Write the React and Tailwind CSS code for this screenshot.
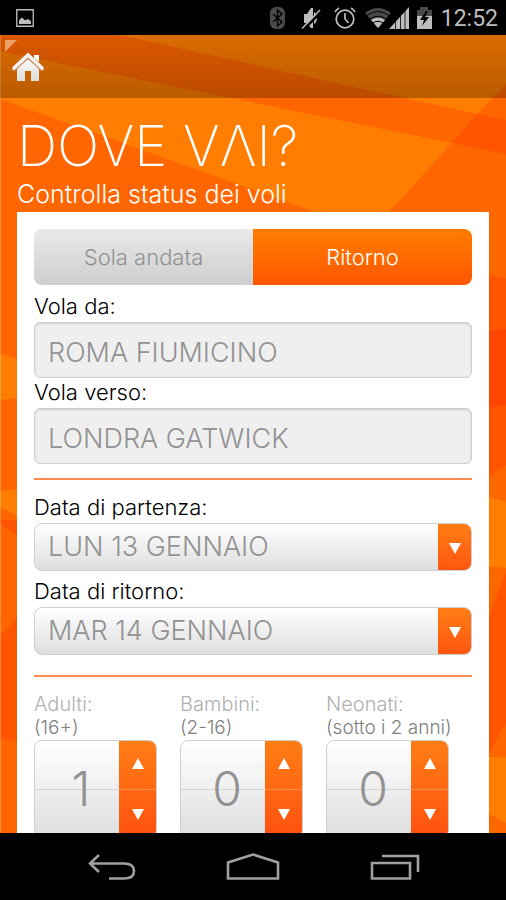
import { useState } from "react";

const light = "#ff7d00";
const dark = "#ff5500";

function Backdrop() {
  return (
    <svg className="absolute inset-0 h-full w-full" viewBox="0 35 506 798" preserveAspectRatio="none" aria-hidden="true">
      <rect x="0" y="35" width="506" height="798" fill="#ff6600" />
      <g fill={light}>
        <path d="M120 35H506V84L477 114Z" />
        <path d="M0 51L452 143L389 212H315L0 99Z" />
        <path d="M0 354L20 360V398L0 400Z" />
        <path d="M0 491L20 489V517L0 507Z" />
        <path d="M486 496L506 502V568L486 566Z" />
        <path d="M486 757H506V823L486 812Z" />
      </g>
      <g fill={dark}>
        <path d="M477 114L506 120V154L452 143Z" />
        <path d="M486 274L506 279V465L486 479Z" />
        <path d="M0 519L20 521V537L0 523Z" />
        <path d="M0 635L20 616V740L0 739Z" />
        <path d="M486 624L506 572V723L486 758Z" />
      </g>
      <path d="M486 331L506 329V405L486 408Z" fill="#ff4600" />
      <rect x="0" y="35" width="1" height="798" fill="#fff" opacity=".25" />
    </svg>
  );
}

function StatusBar() {
  return (
    <div className="flex h-[35px] shrink-0 items-center bg-black pl-4 pr-2 text-[#bdbdbd]">
      <svg width="18" height="18" viewBox="0 0 18 18" aria-hidden="true">
        <path d="M.75.75H17.25V17.25H.75Z" fill="none" stroke="currentColor" strokeWidth="1.3" />
        <path d="M3 15V12L4 10L6 8.500L8.500 11H10L12 10L14 11.500L15 12.500V15Z" fill="currentColor" />
      </svg>
      <svg className="ml-auto" width="164" height="26" viewBox="0 0 164 26" aria-hidden="true">
        <rect x="1" y="2" width="15" height="22" rx="6" fill="#4a4a4a" />
        <path d="M4 9L13 17L8.500 21V5L13 9L4 17" fill="none" stroke="#000" strokeWidth="1.4" />
        <path d="M35 9H38L42 3H44V23H42L38 18H35ZM45 7Q48 9 48 13Q48 17 45 19Z" fill="currentColor" />
        <path d="M34 25L53 6" stroke="#000" strokeWidth="2.500" />
        <path d="M33 23.500L51 5" stroke="currentColor" strokeWidth="1.500" />
        <g fill="none" stroke="currentColor" strokeWidth="1.700">
          <circle cx="76" cy="14" r="8.800" />
          <path d="M76 8V14L79.500 18M66 7Q67.500 4.500 70 3M82 3Q84.500 4.500 86 7" />
        </g>
        <path d="M96 8Q109 -2 122 8L109 23Z" fill="#4a4a4a" />
        <path d="M102 15Q109 10.500 116 15L109 23Z" fill="currentColor" />
        <path d="M98 10.500Q109 2.500 120 10.500M101 14Q109 8.500 117 14M104 18Q109 14.500 114 18" fill="none" stroke="#000" strokeWidth="1" />
        <path d="M120 24L140 2V24Z" fill="currentColor" />
        <path d="M126.500 15V24M131.500 10V24M136 5V24" stroke="#000" strokeWidth=".8" />
        <path d="M148 5H151V2H159V5H163V11H148Z" fill="#4a4a4a" />
        <path d="M148 11H163V24H148Z" fill="currentColor" />
        <path d="M157 6L151 15H155L153 21L160 12H156L159 6Z" fill="#000" />
      </svg>
      <time className="ml-2 pt-[2px] font-['Roboto',sans-serif] text-[23px] font-normal leading-[33px]">12:52</time>
    </div>
  );
}

function HomeIcon() {
  return (
    <svg width="34" height="30" viewBox="0 0 34 30" aria-hidden="true">
      <defs>
        <linearGradient id="home" x2="0" y2="1">
          <stop stopColor="#fff" />
          <stop offset="1" stopColor="#ddd" />
        </linearGradient>
      </defs>
      <path d="M23 3H28V10L23 6ZM6 16L17 6.500L28 16V29H20V19H14V29H6Z" fill="url(#home)" />
      <path d="M3 17L17 4.500L31 17" fill="none" stroke="#c98a5c" strokeWidth="4" strokeLinecap="round" />
      <path d="M3 16L17 3L31 16" fill="none" stroke="#f2f2f2" strokeWidth="3.600" strokeLinecap="round" />
    </svg>
  );
}

function Triangle({ up = false }) {
  return (
    <svg width="12" height="11" viewBox="0 0 12 11" className="shrink-0" aria-hidden="true">
      <path d={up ? "M6 0L12 11H0Z" : "M0 0H12L6 11Z"} fill="#fff" />
    </svg>
  );
}

function Airport({ id, label, value }) {
  return (
    <div>
      <label htmlFor={id} className="block h-[30px] pt-px text-[22px] leading-[26px] text-black">{label}</label>
      <input
        id={id}
        defaultValue={value}
        className="block h-14 w-full rounded-md border border-[#cfcfcf] bg-[#efefef] px-[13px] pt-1 text-[27px] font-light text-[#929292] shadow-[inset_0_1px_2px_#ccc] outline-none"
      />
    </div>
  );
}

function DateField({ id, label, value }) {
  return (
    <div>
      <label htmlFor={id} className="block h-[30px] text-[22px] leading-[28px] text-black">{label}</label>
      <div className="relative h-12 overflow-hidden rounded-lg border border-[#cfcfcf] bg-linear-to-b from-white to-[#dedede]">
        <select id={id} className="block h-full w-full appearance-none bg-transparent pl-[13px] pr-10 text-[27px] font-light text-[#929292] outline-none">
          <option>{value}</option>
        </select>
        <span className="pointer-events-none absolute inset-y-0 right-0 flex w-[33px] items-center justify-center bg-linear-to-b from-[#ff7d14] to-[#ff5510] pt-[2px]">
          <Triangle />
        </span>
      </div>
    </div>
  );
}

function Counter({ id, label, range, initial }) {
  const [count, setCount] = useState(initial);
  return (
    <div>
      <label htmlFor={id} className="block whitespace-nowrap font-light leading-6">
        <span className="block text-[20px] text-[#b0b0b0]">{label}</span>
        <span className="block text-[19px] text-[#808080]">{range}</span>
      </label>
      <div className="flex h-[98px] w-[123px] overflow-hidden rounded-lg border border-[#cfcfcf] bg-linear-to-b from-white to-[#dedede]">
        <div className="flex min-w-0 flex-1 bg-[linear-gradient(#d8d8d8,#d8d8d8)] bg-[length:100%_1px] bg-center bg-no-repeat">
          <input id={id} value={count} onChange={(e) => setCount(Number(e.target.value) || 0)} className="w-full min-w-0 bg-transparent pl-2 text-center text-[48px] font-light text-[#929292] outline-none" />
        </div>
        <div className="flex w-[37px] flex-col bg-linear-to-b from-[#ff7d14] to-[#ff5010]">
          <button type="button" aria-label={"Aumenta " + label} onClick={() => setCount(count + 1)} className="flex flex-1 items-center justify-center border-b border-[#ff8c48] pb-[2px]">
            <Triangle up />
          </button>
          <button type="button" aria-label={"Riduci " + label} onClick={() => setCount(Math.max(0, count - 1))} className="flex flex-1 items-center justify-center pt-[2px]">
            <Triangle />
          </button>
        </div>
      </div>
    </div>
  );
}

function NavBar() {
  return (
    <nav className="flex h-[67px] shrink-0 items-center justify-center gap-[88px] bg-black pt-[2px] text-[#a0a0a0]">
      <button type="button" aria-label="Indietro">
        <svg width="52" height="30" viewBox="0 0 52 30" fill="none" stroke="currentColor" strokeWidth="2.600">
          <path d="M13 2L4 10.500L13 19M4 10.500H38Q48 10.500 48 18Q48 25.500 38 25.500H23" />
        </svg>
      </button>
      <button type="button" aria-label="Home">
        <svg width="54" height="30" viewBox="0 0 54 30" fill="none" stroke="currentColor" strokeWidth="2.600">
          <path d="M2 25.500V9.500L27 1.500L52 9.500V25.500Z" />
        </svg>
      </button>
      <button type="button" aria-label="Recenti">
        <svg width="52" height="30" viewBox="0 0 52 30" fill="none" stroke="currentColor" strokeWidth="2.600">
          <path d="M4 10H42V25.500H4ZM14 3H50V19" />
        </svg>
      </button>
    </nav>
  );
}

export default function App() {
  const [trip, setTrip] = useState("ritorno");
  const on = "bg-linear-to-b from-[#ff7d00] to-[#ff5500] text-white";
  const off = "bg-linear-to-b from-[#e9e9e9] to-[#cecece] text-[#929292]";
  return (
    <div className="flex h-screen flex-col overflow-hidden bg-black font-['Inter','Noto_Sans',sans-serif] font-light">
      <StatusBar />
      <div className="relative min-h-0 flex-1 overflow-hidden">
        <Backdrop />
        <div className="relative">
          <header className="relative flex h-[63px] items-center bg-linear-to-b from-black/14 to-black/27 pl-[11px]">
            <svg className="absolute left-[5px] top-[5px]" width="12" height="12" viewBox="0 0 12 12" aria-hidden="true">
              <path d="M0 0H12L0 12Z" fill="#eca066" />
            </svg>
            <button type="button" aria-label="Home">
              <HomeIcon />
            </button>
          </header>
          <main className="px-[17px]">
            <h1 className="pt-4 text-[56px] font-extralight leading-[64px] text-white">DOVE VΛI?</h1>
            <p className="h-[34px] text-[25px] leading-[32px] text-white">Controlla status dei voli</p>
            <form className="bg-white p-[17px]" onSubmit={(e) => e.preventDefault()}>
              <div className="mb-[7px] grid h-14 grid-cols-2 overflow-hidden rounded-lg text-[22px]">
                <button type="button" aria-pressed={trip === "andata"} onClick={() => setTrip("andata")} className={trip === "andata" ? on : off}>Sola andata</button>
                <button type="button" aria-pressed={trip === "ritorno"} onClick={() => setTrip("ritorno")} className={trip === "ritorno" ? on : off}>Ritorno</button>
              </div>
              <Airport id="da" label="Vola da:" value="ROMA FIUMICINO" />
              <Airport id="verso" label="Vola verso:" value="LONDRA GATWICK" />
              <hr className="mb-[13px] mt-[14px] border-t-2 border-[#ff8c50]" />
              <div className="grid gap-[6px]">
                <DateField id="partenza" label="Data di partenza:" value="LUN 13 GENNAIO" />
                <DateField id="ritorno" label="Data di ritorno:" value="MAR 14 GENNAIO" />
              </div>
              <hr className="mb-[15px] mt-5 border-t-2 border-[#ff8c50]" />
              <div className="grid grid-cols-3">
                <Counter id="adulti" label="Adulti:" range="(16+)" initial={1} />
                <Counter id="bambini" label="Bambini:" range="(2-16)" initial={0} />
                <Counter id="neonati" label="Neonati:" range="(sotto i 2 anni)" initial={0} />
              </div>
            </form>
          </main>
        </div>
      </div>
      <NavBar />
    </div>
  );
}
